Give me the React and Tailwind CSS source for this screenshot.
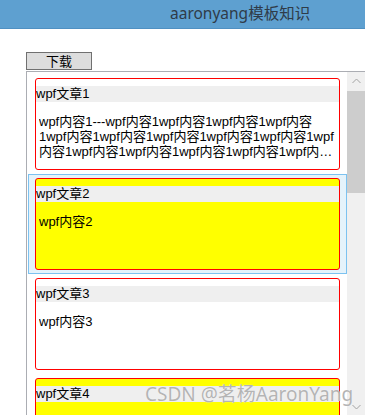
import clsx from "clsx";

const FONT = { fontFamily: '"Noto Sans", "Noto Sans CJK SC", sans-serif' };
const BODY_FONT = { fontFamily: '"Liberation Sans", "Noto Sans CJK SC", sans-serif' };

const LONG_LINES = [
  "wpf内容1---wpf内容1wpf内容1wpf内容1wpf内容",
  "1wpf内容1wpf内容1wpf内容1wpf内容1wpf内容1wpf",
  "内容1wpf内容1wpf内容1wpf内容1wpf内容1wpf内容1wpf内容1",
];

const ARTICLES = [
  { title: "wpf文章1", lines: LONG_LINES, yellow: false },
  { title: "wpf文章2", lines: ["wpf内容2"], yellow: true, selected: true },
  { title: "wpf文章3", lines: ["wpf内容3"], yellow: false },
  { title: "wpf文章4", lines: ["wpf内容4"], yellow: true },
];

function Chevron({ up }) {
  return (
    <svg width="9" height="6" viewBox="0 0 9 6" className="block">
      <polyline
        points={up ? "0.5,5 4.5,1 8.5,5" : "0.5,1 4.5,5 8.5,1"}
        fill="none"
        stroke="#a3a3a3"
        strokeWidth="1"
      />
    </svg>
  );
}

function ArticleItem({ title, lines, yellow, selected }) {
  return (
    <div
      className={clsx(
        "h-[100px] w-[319px] shrink-0 border pl-[6px] pr-[6px] pt-[3px]",
        selected ? "border-[#7cc2f0] bg-[#e5f3fb]" : "border-transparent"
      )}
    >
      <div
        className={clsx(
          "h-[92px] overflow-hidden rounded-[3px] border border-[#ff0000] pt-[7px]",
          yellow ? "bg-[#ffff00]" : "bg-white"
        )}
        style={BODY_FONT}
      >
        <div className="h-[16px] bg-[#efefef] text-[13px] leading-[16px] text-black">{title}</div>
        <div className="pl-[3px] pr-[3px] pt-[12px] text-[13px] leading-[15px] text-black">
          {lines.map((l) => (
            <div key={l} className="truncate">{l}</div>
          ))}
        </div>
      </div>
    </div>
  );
}

export default function App() {
  return (
    <div className="relative h-[415px] w-[365px] overflow-hidden bg-white" style={FONT}>
      <div className="flex h-[29px] items-center border-b border-[#4f90c2] bg-[#5ea0d0] pl-[170px]">
        <span className="text-[15.5px] leading-none text-[#2f3b48]">aaronyang模板知识</span>
      </div>

      <div className="pl-[26px] pt-[23px]">
        <button className="flex h-[18px] w-[66px] items-center justify-center border border-[#707070] bg-[#dddddd] text-[13px] leading-none text-black">
          下载
        </button>

        <div className="mt-[1px] flex h-[344px] border-l border-t border-[#abadb3]">
          <div className="flex flex-1 flex-col pl-[1px] pt-[2px]">
            {ARTICLES.map((a) => (
              <ArticleItem key={a.title} {...a} />
            ))}
          </div>

          <div className="flex w-[18px] shrink-0 flex-col bg-[#f0f0f0]">
            <div className="flex h-[18px] items-center justify-center">
              <Chevron up />
            </div>
            <div className="mt-[1px] h-[102px] bg-[#cdcdcd]" />
            <div className="flex-1" />
            <div className="flex h-[16px] items-center justify-center">
              <Chevron />
            </div>
          </div>
        </div>
      </div>

      <div
        className="absolute left-[145px] top-[382px] text-[19px] leading-[24px] text-[#b4b4b4]"
        style={{ textShadow: "0 0 1px #fff" }}
      >
        CSDN @茗杨AaronYang
      </div>
    </div>
  );
}
